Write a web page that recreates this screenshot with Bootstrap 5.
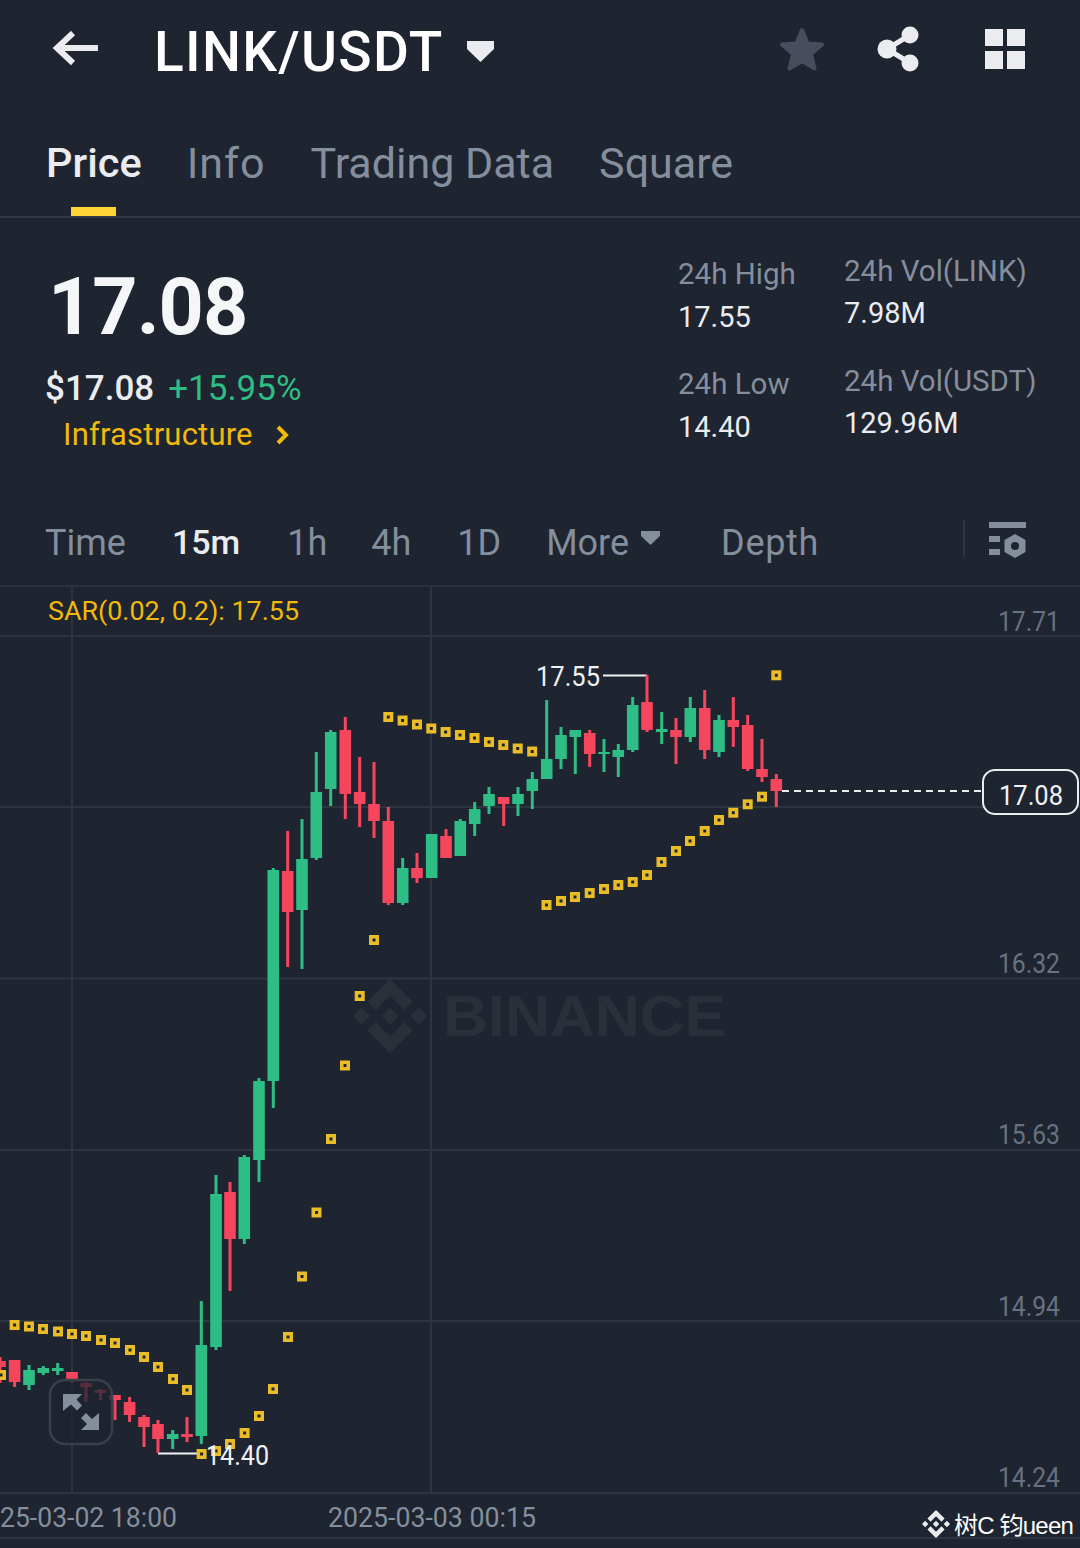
<!DOCTYPE html>
<html lang="en">
<head>
  <meta charset="UTF-8">
  <title>LINK/USDT</title>
  <meta name="viewport" content="width=device-width, initial-scale=1">
  <link href="https://cdn.jsdelivr.net/npm/bootstrap@5.3.0/dist/css/bootstrap.min.css" rel="stylesheet">
  <style>
    html, body { background: #1e2430; }
    body { width: 1080px; height: 1548px; overflow: hidden; font-family: Roboto, "Noto Sans", sans-serif; color: #eaecef; }
    .top-bar { height: 98px; padding: 0 55px 0 52px; }
    .pair-name { font-size: 55px; font-weight: 500; color: #fff; margin: 6px 22px 0 56px; line-height: 1; letter-spacing: 1.3px; }
    .caret-big { margin-top: 4px; }
    .tab-row { height: 120px; padding: 0 0 0 46px; border-bottom: 2px solid #343a45; gap: 45px; }
    .tab-item { font-size: 43px; font-weight: 400; color: #848e9c; position: relative; height: 100%; padding-top: 40px; line-height: 50px; }
    .tab-item.on { color: #eaecef; font-weight: 500; font-size: 41.500px; }
    .tab-item.on::after { content: ""; position: absolute; left: 25px; bottom: 0; width: 45px; height: 9px; background: #fcd535; }
    .tab-wide { letter-spacing: 1px; }
    .stats-box { height: 276px; padding: 0 0 0 45px; }
    .big-price { font-size: 79px; font-weight: 700; line-height: 1; color: #f5f6f8; margin: 50px 0 0 3px; letter-spacing: -1px; }
    .usd-line { font-size: 35px; font-weight: 500; margin-top: 21px; line-height: 42px; }
    .up-pct { color: #2ebd85; margin-left: 14px; font-size: 35px; font-weight: 400; }
    .sector-link { color: #f0b90b; font-size: 31px; margin: 7px 0 0 18px; line-height: 36px; letter-spacing: .2px; }
    .stat-col-a { width: 166px; padding-top: 38px; }
    .stat-col-b { width: 236px; padding-top: 35px; }
    .stat-lbl { font-size: 29.500px; color: #848e9c; line-height: 36px; height: 36px; white-space: nowrap; }
    .stat-val { font-size: 29px; color: #eaecef; line-height: 36px; height: 36px; margin-top: 7px; white-space: nowrap; }
    .stat-gap { height: 31px; }
    .stat-col-b .stat-val { margin-top: 6px; }
    .stat-col-b .stat-gap { height: 32px; }
    .frame-row { height: 93px; padding: 6px 0 0 45px; border-bottom: 2px solid #2b313b; font-size: 36px; color: #848e9c; }
    .frame-row span { display: block; }
    .frame-on { color: #eaecef; font-weight: 500; font-size: 34px; }
    .frame-depth { letter-spacing: .7px; }
    .frame-rule { width: 2px; height: 37px; background: #2f3540; margin-bottom: 8px; }
    .frame-ico { margin: 0 53px 6px 24px; }
    .frame-caret { margin: -10px 61px 0 0; }
    .chart-box { height: 961px; }
    .chart-box svg { display: block; }
    .axis-txt { font-family: Roboto, sans-serif; font-size: 27px; fill: #687180; }
    .date-txt { font-family: Roboto, sans-serif; font-size: 27px; fill: #848e9c; }
    .hi-txt { font-family: Roboto, sans-serif; font-size: 27px; fill: #f0f1f3; }
    .sar-txt { font-family: Roboto, sans-serif; font-size: 26px; fill: #f0b90b; }
    .mark-txt { font-family: "Liberation Sans", sans-serif; font-size: 58px; font-weight: 700; fill: #2a303a; }
    .sign-txt { font-family: "Liberation Sans", "Noto Sans CJK SC", sans-serif; font-size: 24px; letter-spacing: -.8px; fill: #fff; }
  </style>
</head>
<body>

  <!-- header -->
  <div class="top-bar d-flex align-items-center">
    <svg width="46" height="36" viewBox="0 0 46 36"><path d="M46 17H6M21 2 5 17l16 15" fill="none" stroke="#eaecef" stroke-width="6"/></svg>
    <span class="pair-name">LINK/USDT</span>
    <svg class="caret-big" width="29" height="21" viewBox="0 0 29 21"><path d="M1 0h27v8L14.500 21 1 8z" fill="#eaecef"/></svg>
    <svg class="ms-auto" width="46" height="46" viewBox="0 0 46 46"><path d="M23 4l5.500 13.500 14.500 1-11 9.500 3.500 14.500L23 35 10.500 42.500 14 28 3 18.500l14.500-1z" fill="#474d5c" stroke="#474d5c" stroke-width="4" stroke-linejoin="round"/></svg>
    <svg style="margin-left:51px" width="46" height="46" viewBox="0 0 46 46"><path d="M34 9 11 23l23 14" fill="none" stroke="#eaecef" stroke-width="5"/><circle cx="34" cy="9" r="8.500" fill="#eaecef"/><circle cx="11" cy="23" r="9.500" fill="#eaecef"/><circle cx="34" cy="37" r="8.500" fill="#eaecef"/></svg>
    <svg style="margin-left:63px" width="40" height="40" viewBox="0 0 40 40"><path d="M0 0h18v17H0zM22 0h18v17H22zM0 22h18v18H0zM22 22h18v18H22z" fill="#eaecef"/></svg>
  </div>

  <!-- tabs -->
  <div class="tab-row d-flex">
    <div class="tab-item on">Price</div>
    <div class="tab-item tab-wide">Info</div>
    <div class="tab-item">Trading Data</div>
    <div class="tab-item">Square</div>
  </div>

  <!-- price block -->
  <div class="stats-box d-flex">
    <div class="flex-grow-1">
      <div class="big-price">17.08</div>
      <div class="usd-line">$17.08<span class="up-pct">+15.95%</span></div>
      <div class="sector-link d-flex align-items-center">Infrastructure
        <svg style="margin-left:23px" width="14" height="20" viewBox="0 0 14 20"><path d="M2 2l8 8-8 8" fill="none" stroke="#f0b90b" stroke-width="4"/></svg>
      </div>
    </div>
    <div class="stat-col-a">
      <div class="stat-lbl">24h High</div>
      <div class="stat-val">17.55</div>
      <div class="stat-gap"></div>
      <div class="stat-lbl">24h Low</div>
      <div class="stat-val">14.40</div>
    </div>
    <div class="stat-col-b">
      <div class="stat-lbl">24h Vol(LINK)</div>
      <div class="stat-val">7.98M</div>
      <div class="stat-gap"></div>
      <div class="stat-lbl">24h Vol(USDT)</div>
      <div class="stat-val">129.96M</div>
    </div>
  </div>

  <!-- timeframes -->
  <div class="frame-row d-flex align-items-center">
    <span style="margin-right:46px">Time</span>
    <span class="frame-on" style="margin-right:47px">15m</span>
    <span style="margin-right:44px">1h</span>
    <span style="margin-right:46px">4h</span>
    <span style="margin-right:45px">1D</span>
    <span style="margin-right:12px">More</span>
    <svg class="frame-caret" width="19" height="14" viewBox="0 0 19 14"><path d="M0 0h19v5l-9.500 9L0 5z" fill="#848e9c"/></svg>
    <span class="frame-depth">Depth</span>
    <div class="frame-rule ms-auto"></div>
    <svg class="frame-ico" width="38" height="36" viewBox="0 0 38 36"><path d="M0 0h37v6H0zM0 14h11v6H0zM0 27h11v6H0z" fill="#848e9c"/><path fill-rule="evenodd" d="M26 12l10.500 6v12L26 36l-10.500-6V18zM26 20a4 4 0 1 0 0 8 4 4 0 0 0 0-8z" fill="#848e9c"/></svg>
  </div>

  <!-- chart: y in the svg = y in the screenshot -->
  <div class="chart-box">
    <svg id="chart" width="1080" height="961" viewBox="0 587 1080 961"></svg>
  </div>

  <script>
    const GREEN = '#2ebd85', RED = '#f6465d';
    // x, high, body top, body bottom, low, up?
    const candles = [
      [0,1357,1361,1367,1383,0],[14.6,1360,1360,1382,1387,0],[29,1365,1370,1385,1390,1],[43.3,1366,1368,1373,1375,1],
      [57.7,1363,1368,1371,1375,1],[72,1372,1372,1380,1383,0],[86,1382,1383,1387,1402,0],[100.6,1389,1390,1393,1400,0],
      [115,1395,1395,1400,1420,0],[129.6,1397,1402,1415,1422,0],[144,1415,1417,1427,1447,0],[158,1420,1424,1439,1453,0],
      [172.7,1430,1434,1439,1449,1],[187,1417,1434,1437,1442,0],[201.3,1301,1345,1436,1444,1],[216,1175,1194,1347,1350,1],
      [230,1182,1192,1239,1291,0],[244.3,1155,1157,1239,1244,1],[259,1078,1081,1160,1182,1],[273.3,868,870,1081,1108,1],
      [287.7,831,871,912,967,0],[302,819,859,910,969,1],[316.3,752,792,858,860,1],[330.7,730,732,789,806,1],
      [345.3,717,730,794,819,0],[359.7,757,792,804,827,0],[374,762,804,821,838,0],[388.3,807,821,903,905,0],
      [402.7,858,868,903,905,1],[417,853,868,878,883,0],[431.7,834,834,878,878,1],[446,829,836,858,858,0],
      [460.3,819,821,856,856,1],[474.7,802,809,824,836,1],[489,787,794,806,814,1],[503.7,797,797,804,826,0],
      [518,787,794,804,816,1],[532.3,772,779,791,809,1],[546.7,700,759,779,779,1],[561,727,735,759,769,1],
      [575.3,730,730,737,774,1],[589.7,730,733,754,767,0],[604,739,752,754,772,1],[618.3,744,750,757,777,1],
      [632.7,697,705,750,752,1],[647,675,702,730,732,0],[661.7,712,729,732,744,1],[676,718,730,737,764,0],
      [690.3,697,708,737,742,1],[704.7,690,708,750,759,0],[719,715,720,752,757,1],[733.3,697,720,727,747,0],
      [747.7,715,725,769,771,0],[762,739,769,777,782,0],[776.3,774,779,791,807,0]
    ];
    const sar = [
      [1,1375],[14.6,1325],[29,1326.5],[43,1329],[58,1331.5],[72,1334],[86,1336],[101,1340],[115,1343],[130,1350],
      [144,1357],[158,1367],[173,1379],[187,1390],[201.6,1454],[216,1451],[230,1444],[244.6,1433],[259,1416],[273,1389],
      [288,1337],[302,1276.5],[316.5,1212.5],[331,1139],[345,1065.5],[359.7,996],[374,940],[388.3,717],[402.6,720.5],
      [417,724.5],[431.3,728.5],[445.6,732],[460,735],[474.5,738],[489,742],[503.3,745],[517.7,748.5],[532.2,751.5],
      [546.5,905],[561,901],[575,897],[589.7,893],[604,889],[618.3,885],[632.7,882],[647,875],[661.5,862],[676,851],
      [690,841],[704.7,831],[719,820],[733.3,812.7],[747.7,804.3],[762,796.7],[776.3,675.3]
    ];
    const LOGO = 'M16.624 13.9202l2.7175 2.7154-7.353 7.353-7.353-7.352 2.7175-2.7164 4.6355 4.6595 4.6356-4.6595zm4.6366-4.6366L24 12l-2.7154 2.7164L18.5682 12l2.6924-2.7164zm-9.272.001l2.7163 2.6914-2.7164 2.7174v-.001L9.2721 12l2.7164-2.7154zm-9.2722-.001L5.4088 12l-2.6914 2.6924L0 12l2.7164-2.7164zM11.9885.0115l7.353 7.329-2.7174 2.7154-4.6356-4.6356-4.6355 4.6595-2.7174-2.7154 7.353-7.353z';

    let s = '';
    // grid
    [636, 807, 978.5, 1150, 1321, 1493, 1538].forEach(y => {
      s += `<path d="M0 ${y}H1080" stroke="#2f3540" stroke-width="2"/>`;
    });
    [72, 431].forEach(x => {
      s += `<path d="M${x} 587V1493" stroke="#2f3540" stroke-width="2"/>`;
    });
    // watermark
    s += `<path d="${LOGO}" fill="#2a303a" transform="translate(353 979) scale(3.09)"/>`;
    s += `<text class="mark-txt" x="443" y="1036" textLength="283" lengthAdjust="spacingAndGlyphs">BINANCE</text>`;
    // axis
    [[17.71, 631], [16.32, 973], [15.63, 1144], [14.94, 1316], [14.24, 1487]].forEach(a => {
      s += `<text class="axis-txt" x="998" y="${a[1]}" textLength="62" lengthAdjust="spacingAndGlyphs">${a[0]}</text>`;
    });
    s += `<text class="date-txt" x="0" y="1527" textLength="177" lengthAdjust="spacingAndGlyphs">25-03-02 18:00</text>`;
    s += `<text class="date-txt" x="328" y="1527" textLength="208" lengthAdjust="spacingAndGlyphs">2025-03-03 00:15</text>`;
    s += `<text class="sar-txt" x="48" y="620" textLength="251" lengthAdjust="spacingAndGlyphs">SAR(0.02, 0.2): 17.55</text>`;
    // high/low marks
    s += `<path d="M603 675.500H647M158 1453.500H200" stroke="#f0f1f3" stroke-width="2"/>`;
    s += `<text class="hi-txt" x="536" y="686" textLength="64" lengthAdjust="spacingAndGlyphs">17.55</text>`;
    // candles
    candles.forEach(c => {
      const col = c[5] ? GREEN : RED;
      s += `<rect x="${c[0] - 1.5}" y="${c[1]}" width="3" height="${c[4] - c[1]}" fill="${col}"/>`;
      s += `<rect x="${c[0] - 5.8}" y="${c[2]}" width="11.600" height="${c[3] - c[2]}" fill="${col}"/>`;
    });
    // sar dots
    sar.forEach(d => {
      s += `<rect x="${d[0] - 5}" y="${d[1] - 5}" width="10" height="10" fill="#e9bc28"/>`;
      s += `<rect x="${d[0] - 1.5}" y="${d[1] - 1.5}" width="3" height="3" fill="#1e2430"/>`;
    });
    s += `<text class="hi-txt" x="206" y="1465" textLength="63" lengthAdjust="spacingAndGlyphs">14.40</text>`;
    // last price
    s += `<path d="M782 791H982" stroke="#eaecef" stroke-width="2" stroke-dasharray="7 5"/>`;
    s += `<rect x="983" y="770" width="95" height="44" rx="12" fill="#1e2430" stroke="#eaecef" stroke-width="2"/>`;
    s += `<text class="hi-txt" x="999" y="805" textLength="64" lengthAdjust="spacingAndGlyphs">17.08</text>`;
    // fullscreen button
    s += `<rect x="50" y="1380" width="62" height="64" rx="15" fill="#1e2430" fill-opacity=".75" stroke="#3a404b" stroke-width="2.500"/>`;
    s += `<path d="M63 1394h19l-5.500 5.500 5.500 6-5 5-6-6-8 6.500zM99 1430H81l6-6-6-6 5-5 6 6 7-6z" fill="#848e9c"/>`;
    // signature
    s += `<path d="${LOGO}" fill="#eaecef" transform="translate(922 1510) scale(1.17)"/>`;
    s += `<text class="sign-txt" x="954" y="1534">树C 钧ueen</text>`;
    document.getElementById('chart').innerHTML = s;
  </script>
  <script src="https://cdn.jsdelivr.net/npm/bootstrap@5.3.0/dist/js/bootstrap.bundle.min.js"></script>
</body>
</html>
